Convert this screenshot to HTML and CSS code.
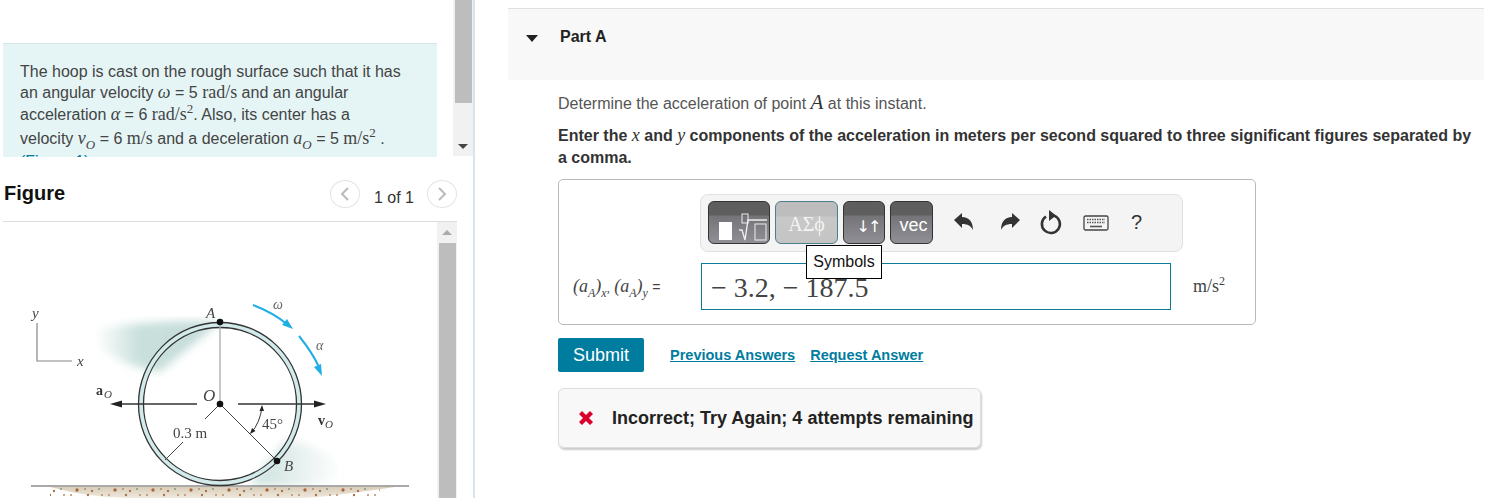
FILE: index.html
```html
<!DOCTYPE html>
<html lang="en">
<head>
  <meta charset="UTF-8">
  <title>Part A - Hoop</title>
  <meta name="viewport" content="width=device-width, initial-scale=1">
  <link rel="stylesheet" href="styles.css">
</head>
<body>
  <div class="page">
    <div class="left">
      <div class="prompt-row">
        <div class="prompt">
          <div class="line">The hoop is cast on the rough surface such that it has</div>
          <div class="line">an angular velocity <i class="mi">ω</i> = 5 <span class="mn">rad/s</span> and an angular</div>
          <div class="line tall">acceleration <i class="mi">α</i> = 6 <span class="mn">rad/s<sup>2</sup></span>. Also, its center has a</div>
          <div class="line tall">velocity <i class="mi">v<sub>O</sub></i> = 6 <span class="mn">m/s</span> and a deceleration <i class="mi">a<sub>O</sub></i> = 5 <span class="mn">m/s<sup>2</sup></span> .</div>
          <div class="line tall fig-link">(Figure 1)</div>
        </div>
        <div class="scrollbar top-bar">
          <div class="thumb"></div>
          <div class="arrow-down"></div>
        </div>
      </div>

      <div class="figure-head">
        <h2>Figure</h2>
        <div class="pager">
          <span class="pager-btn"><svg width="10" height="14" viewBox="0 0 10 14"><path d="M8 1 2 7l6 6" fill="none" stroke="#bbb" stroke-width="2"/></svg></span>
          <span class="pager-text">1 of 1</span>
          <span class="pager-btn"><svg width="10" height="14" viewBox="0 0 10 14"><path d="M2 1l6 6-6 6" fill="none" stroke="#bbb" stroke-width="2"/></svg></span>
        </div>
      </div>

      <div class="figure-body">
        <svg class="figure" width="437" height="276" viewBox="0 222 437 276">
          <defs>
            <linearGradient id="shadeA" x1="0" x2="1" y1="0" y2="0">
              <stop offset="0" stop-color="#c9e0dc" stop-opacity="0"/>
              <stop offset="0.35" stop-color="#c9e0dc"/>
              <stop offset="1" stop-color="#c4dcd9"/>
            </linearGradient>
            <linearGradient id="shadeB" x1="0" x2="1" y1="0" y2="0">
              <stop offset="0" stop-color="#c9e0dc"/>
              <stop offset="1" stop-color="#c9e0dc" stop-opacity="0"/>
            </linearGradient>
            <linearGradient id="groundFade" x1="0" x2="0" y1="0" y2="1">
              <stop offset="0" stop-color="#d9cdb8"/>
              <stop offset="1" stop-color="#efe9dd"/>
            </linearGradient>
            <pattern id="gravel" width="38" height="11" patternUnits="userSpaceOnUse" x="30" y="487">
              <circle cx="9" cy="3" r="1.7" fill="#a9663f"/>
              <circle cx="17" cy="2" r="1" fill="#b98a66"/>
              <circle cx="24" cy="4" r="1.2" fill="#a9734f"/>
              <circle cx="31" cy="2" r="0.9" fill="#7f8f7a"/>
              <circle cx="3" cy="8" r="1" fill="#b98a66"/>
              <circle cx="20" cy="8" r="1.2" fill="#a9734f"/>
              <circle cx="34" cy="8" r="1" fill="#b98a66"/>
            </pattern>
            <filter id="soft"><feGaussianBlur stdDeviation="4"/></filter>
          </defs>

          <path d="M95 330 C130 322 180 320 220 322 L160 372 C135 368 110 358 98 345Z" fill="url(#shadeA)" filter="url(#soft)"/>
          <path d="M285 440 C320 445 345 462 340 476 C325 488 280 488 250 484Z" fill="url(#shadeB)" filter="url(#soft)"/>

          <path d="M50 487 H395 Q320 498 300 498 H130 Q90 498 50 487Z" fill="url(#groundFade)"/>
          <rect x="50" y="487" width="330" height="11" fill="url(#gravel)"/>
          <line x1="31" y1="486" x2="409" y2="486" stroke="#555" stroke-width="1.2"/>

          <circle cx="220" cy="404" r="79" fill="none" stroke="#d3eaea" stroke-width="5"/>
          <circle cx="220" cy="404" r="81.5" fill="none" stroke="#333" stroke-width="1.3"/>
          <circle cx="220" cy="404" r="76.5" fill="none" stroke="#333" stroke-width="1.3"/>

          <line x1="220" y1="322" x2="220" y2="404" stroke="#aaa" stroke-width="1.3"/>
          <path d="M197 404 H120" stroke="#333" stroke-width="1.4"/>
          <path d="M110 404 l12 -3.5 v7z" fill="#222"/>
          <path d="M238 404 H316" stroke="#333" stroke-width="1.4"/>
          <path d="M326 404 l-12 -3.5 v7z" fill="#222"/>
          <path d="M220 404 L277 461" stroke="#444" stroke-width="1"/>
          <path d="M220 404 L205 419 M183 442 L165 460" stroke="#444" stroke-width="1"/>
          <path d="M262 407 Q260 423 251 433" fill="none" stroke="#333" stroke-width="1"/>
          <path d="M262 405 l-2.5 6 h4.5z M250 434 l2 -6 l3.5 3z" fill="#222"/>

          <circle cx="220" cy="322" r="3.3" fill="#111"/>
          <circle cx="220" cy="404" r="3.3" fill="#111"/>
          <circle cx="277" cy="461" r="3.3" fill="#111"/>

          <path d="M37 323 V361 H72" fill="none" stroke="#888" stroke-width="1.2"/>

          <path d="M253 305 Q274 313 288 325" fill="none" stroke="#20aee5" stroke-width="2"/>
          <path d="M293 329 l-11 -4 l5 -6z" fill="#20aee5"/>
          <path d="M299 336 Q312 352 319 367" fill="none" stroke="#20aee5" stroke-width="2"/>
          <path d="M322 376 l-8 -9 l7 -3z" fill="#20aee5"/>

          <g class="fig-text">
            <text x="32" y="318" class="it">y</text>
            <text x="77" y="366" class="it">x</text>
            <text x="206" y="318" class="it">A</text>
            <text x="273" y="309" class="it soft">ω</text>
            <text x="316" y="350" class="it soft">α</text>
            <text x="96" y="395" class="bd">a</text>
            <text x="104" y="398" class="it small">O</text>
            <text x="203" y="401" class="it big">O</text>
            <text x="173" y="438">0.3 m</text>
            <text x="262" y="429">45°</text>
            <text x="318" y="425" class="bd">v</text>
            <text x="325" y="428" class="it small">O</text>
            <text x="284" y="471" class="it">B</text>
          </g>
        </svg>
        <div class="scrollbar fig-bar">
          <div class="arrow-up"></div>
          <div class="thumb"></div>
        </div>
      </div>
    </div>

    <div class="right">
      <div class="part-head">
        <span class="caret"></span>
        <span class="part-title">Part A</span>
      </div>

      <div class="question">
        <p class="q-text">Determine the acceleration of point <i class="mi big-mi">A</i> at this instant.</p>
        <p class="q-bold">Enter the <i class="mi q-mi">x</i> and <i class="mi q-mi">y</i> components of the acceleration in meters per second squared to three significant figures separated by a comma.</p>

        <div class="answer">
          <div class="toolbar">
            <span class="tool wide">
              <svg width="60" height="34" viewBox="0 0 60 34">
                <rect x="10" y="13" width="13" height="18" fill="#fff"/>
                <path d="M30 21h3l3 10 3-20h19" fill="none" stroke="#eee" stroke-width="1.4"/>
                <rect x="33" y="5" width="6" height="9" fill="none" stroke="#eee" stroke-width="1"/>
                <rect x="46" y="15" width="11" height="16" fill="none" stroke="#eee" stroke-width="1"/>
              </svg>
            </span>
            <span class="tool wide active">ΑΣϕ</span>
            <span class="tool narrow"><span class="arrows">↓↑</span></span>
            <span class="tool narrow vec">vec</span>
            <div class="actions">
              <svg class="act" width="24" height="22" viewBox="0 0 24 22"><path d="M2 8 10 1v4c7 0 11 5 11 13-2-4-5-6-11-6v4z" fill="#333"/></svg>
              <svg class="act" width="24" height="22" viewBox="0 0 24 22"><path d="M22 8 14 1v4C7 5 3 10 3 18c2-4 5-6 11-6v4z" fill="#333"/></svg>
              <svg class="act" width="24" height="26" viewBox="0 0 24 26"><path d="M15 5.600A9 9 0 1 1 7 6.500" fill="none" stroke="#333" stroke-width="2.6"/><path d="M10 0v11l7-5.500z" fill="#333"/></svg>
              <svg class="act" width="26" height="16" viewBox="0 0 26 16"><rect x="1" y="1" width="24" height="14" rx="1.500" fill="none" stroke="#444" stroke-width="1.300"/><path d="M4 4.500h18M4 7.500h18" stroke="#555" stroke-width="1.600" stroke-dasharray="1.500 1"/><path d="M7 11.500h12" stroke="#555" stroke-width="1.600"/></svg>
              <span class="help">?</span>
            </div>
          </div>

          <div class="input-row">
            <span class="math-label"><i>(a<sub>A</sub>)<sub>x</sub></i><span class="sep">,</span> <i>(a<sub>A</sub>)<sub>y</sub></i> <span class="eq">=</span></span>
            <div class="math-input">− 3.2, − 187.5</div>
            <span class="units">m/s<sup>2</sup></span>
          </div>

          <div class="tooltip">Symbols</div>
        </div>

        <div class="actions-row">
          <button class="submit">Submit</button>
          <a href="#" class="link first">Previous Answers</a>
          <a href="#" class="link">Request Answer</a>
        </div>

        <div class="feedback">
          <svg width="18" height="18" viewBox="0 0 18 18"><path d="M2 5 5 2l4 4 4-4 3 3-4 4 4 4-3 3-4-4-4 4-3-3 4-4z" fill="#d9002b"/></svg>
          <span>Incorrect; Try Again; 4 attempts remaining</span>
        </div>
      </div>
    </div>
  </div>
</body>
</html>
```

FILE: styles.css
```css
html, body { margin: 0; height: 100%; overflow: hidden; }
body {
  font-family: "Liberation Sans", Arial, sans-serif;
  background: #fff;
  color: #333;
}
.page {
  display: flex;
  height: 498px;
}

/* left column */
.left {
  width: 473px;
  flex: none;
  border-right: 2px solid #d7e3ee;
  display: flex;
  flex-direction: column;
}
.prompt-row {
  display: flex;
  height: 156px;
  flex: none;
}
.prompt {
  width: 396px;
  height: 112px;
  margin: 43px 0 0 3px;
  padding: 18px 18px 0 17px;
  box-sizing: content-box;
  height: 95px;
  width: 399px;
  background: #e5f5f6;
  border-top: 1px solid #d8e4e6;
  overflow: hidden;
  font-size: 16px;
  color: #444;
}
.line {
  height: 20px;
  line-height: 20px;
  white-space: nowrap;
}
.line.tall { height: 24px; line-height: 24px; }
.fig-link { color: #007c9c; }
.mi {
  font-family: "Liberation Serif", serif;
  font-size: 18px;
  font-style: italic;
}
.mi sub { font-size: 13px; line-height: 0; }
.mn {
  font-family: "Liberation Serif", serif;
  font-size: 18px;
}
.mn sup { font-size: 13px; line-height: 0; }
.scrollbar {
  background: #f1f1f1;
  display: flex;
  flex-direction: column;
  align-items: center;
}
.thumb { background: #bdbdbd; }
.top-bar {
  width: 20px;
  height: 156px;
  margin-left: 16px;
}
.top-bar .thumb { width: 17px; height: 103px; }
.arrow-down {
  width: 0;
  height: 0;
  margin-top: 41px;
  border-left: 5px solid transparent;
  border-right: 5px solid transparent;
  border-top: 5px solid #444;
}
.arrow-up {
  width: 0;
  height: 0;
  margin: 8px 0;
  border-left: 5px solid transparent;
  border-right: 5px solid transparent;
  border-bottom: 5px solid #aaa;
}
.figure-head {
  height: 49px;
  margin: 16px 16px 0 3px;
  border-bottom: 1px solid #ddd;
  display: flex;
  justify-content: space-between;
  flex: none;
}
.figure-head h2 {
  margin: 9px 0 0 1px;
  font-size: 20px;
  line-height: 24px;
  color: #111;
}
.pager {
  display: flex;
  align-items: flex-start;
  margin-top: 8px;
}
.pager-btn {
  width: 30px;
  height: 28px;
  border: 1px solid #e4e4e4;
  border-radius: 50%;
  box-sizing: border-box;
  display: flex;
  align-items: center;
  justify-content: center;
}
.pager-text {
  font-size: 16px;
  line-height: 18px;
  margin: 9px 13px 0 14px;
}
.figure-body {
  display: flex;
  flex: 1;
  min-height: 0;
}
.figure {
  display: block;
  flex: none;
  filter: blur(0.35px);
}
.fig-text text {
  font-family: "Liberation Serif", serif;
  font-size: 15px;
  fill: #444;
}
.fig-text .it { font-style: italic; }
.fig-text .bd { font-weight: bold; font-size: 14px; fill: #333; }
.fig-text .small { font-size: 11px; }
.fig-text .big { font-size: 17px; }
.fig-text .soft { fill: #666; font-size: 14px; }
.fig-bar {
  width: 20px;
  flex: none;
}
.fig-bar .thumb { width: 17px; flex: 1; }

/* right column */
.right {
  flex: 1;
  padding: 8px 21px 0 33px;
}
.part-head {
  height: 71px;
  background: #f8f8f8;
  border-top: 1px solid #e0e0e0;
  display: flex;
  align-items: flex-start;
  padding-top: 19px;
  box-sizing: border-box;
  height: 72px;
}
.caret {
  width: 0;
  height: 0;
  margin: 7px 0 0 18px;
  border-left: 6.5px solid transparent;
  border-right: 6.5px solid transparent;
  border-top: 7px solid #222;
}
.part-title {
  margin-left: 22px;
  font-size: 16px;
  font-weight: bold;
  line-height: 18px;
  color: #222;
}
.question { padding-left: 50px; }
.q-text {
  margin: 14px 0 0;
  font-size: 16px;
  line-height: 20px;
  color: #555;
}
.big-mi { font-size: 21px; line-height: 0; color: #333; }
.q-bold {
  margin: 11px 0 0;
  font-size: 16px;
  line-height: 22px;
  font-weight: bold;
  color: #333;
}
.q-mi { font-weight: normal; line-height: 0; }
.answer {
  position: relative;
  width: 698px;
  height: 146px;
  margin-top: 10px;
  box-sizing: border-box;
  border: 1px solid #bbb;
  border-radius: 5px;
  padding: 14px 0 0 141px;
}
.toolbar {
  width: 483px;
  height: 58px;
  box-sizing: border-box;
  background: #f4f4f4;
  border: 1px solid #e0e0e0;
  border-radius: 8px;
  padding: 6px 0 0 7px;
  display: flex;
  align-items: flex-start;
  gap: 5px;
}
.tool {
  height: 43px;
  box-sizing: border-box;
  border: 1px solid #333;
  border-radius: 6px;
  background: linear-gradient(#5e5e5e 0, #5e5e5e 13px, #747478 14px, #8f8f95 100%);
  color: #fff;
  display: flex;
  align-items: flex-end;
  justify-content: center;
  overflow: hidden;
}
.tool.wide { width: 62px; }
.tool.narrow { width: 42px; }
.tool.vec {
  width: 43px;
  font-size: 18px;
  line-height: 35px;
  padding-left: 4px;
}
.tool svg { display: block; }
.tool.active {
  width: 63px;
  border-color: #4b7f8a;
  background: linear-gradient(#bdbdbd 0, #bdbdbd 14px, #c8c8c8 15px, #c4c4c4 100%);
  color: #f4f4f4;
  font-family: "Liberation Serif", serif;
  font-size: 20px;
  line-height: 37px;
}
.arrows {
  font-family: "DejaVu Sans", sans-serif;
  font-size: 16px;
  line-height: 32px;
  letter-spacing: -2px;
  padding-left: 8px;
}
.actions {
  display: flex;
  align-items: center;
  height: 43px;
  margin-left: 14px;
}
.act { display: block; }
.act:nth-child(1) { margin-right: 22px; }
.act:nth-child(2) { margin-right: 17px; }
.act:nth-child(3) { margin-right: 20px; }
.help {
  margin-left: 22px;
  font-size: 20px;
  color: #333;
}
.input-row {
  position: absolute;
  left: 14px;
  top: 83px;
  display: flex;
  align-items: center;
}
.math-label {
  width: 128px;
  font-family: "Liberation Serif", serif;
  font-size: 18px;
  color: #444;
  white-space: nowrap;
}
.math-label sub { font-size: 12px; line-height: 0; }
.math-label .sep { font-size: 12px; }
.math-label .eq {
  font-family: "Liberation Sans", sans-serif;
  font-size: 14px;
}
.math-input {
  width: 470px;
  height: 47px;
  box-sizing: border-box;
  border: 1px solid #0e7c99;
  padding-left: 9px;
  font-family: "Liberation Serif", serif;
  font-size: 28px;
  line-height: 47px;
  color: #444;
  overflow: hidden;
  white-space: nowrap;
}
.units {
  margin-left: 22px;
  font-family: "Liberation Serif", serif;
  font-size: 18px;
  color: #444;
}
.units sup { font-size: 12px; line-height: 0; }
.tooltip {
  position: absolute;
  left: 247px;
  top: 65px;
  width: 76px;
  height: 34px;
  box-sizing: border-box;
  background: #fff;
  border: 1px solid #000;
  font-size: 16px;
  line-height: 32px;
  text-align: center;
  color: #111;
}
.actions-row {
  display: flex;
  align-items: center;
  margin-top: 13px;
}
.submit {
  width: 86px;
  height: 34px;
  border: none;
  border-radius: 2px;
  padding: 0;
  background: #007c9e;
  color: #fff;
  font-family: "Liberation Sans", sans-serif;
  font-size: 18px;
}
.link {
  font-size: 14.500px;
  font-weight: bold;
  color: #007c9e;
  text-decoration: underline;
  margin-left: 15px;
}
.link.first { margin-left: 26px; }
.feedback {
  width: 423px;
  height: 60px;
  margin-top: 16px;
  box-sizing: border-box;
  display: flex;
  align-items: center;
  gap: 17px;
  padding-left: 18px;
  background: #f8f8f8;
  border: 1px solid #ddd;
  border-radius: 6px;
  box-shadow: 1px 2px 2px #ccc;
  font-size: 18px;
  font-weight: bold;
  color: #222;
  white-space: nowrap;
}
```
